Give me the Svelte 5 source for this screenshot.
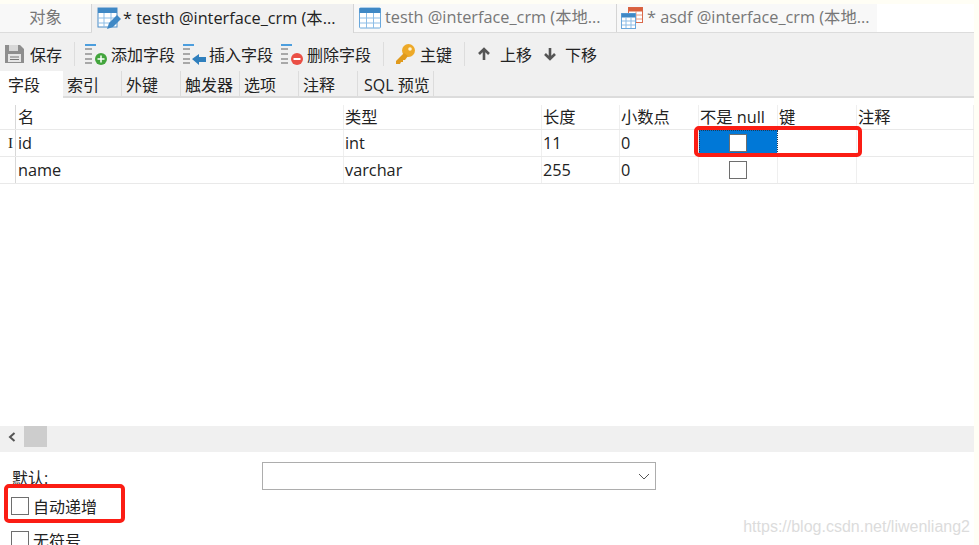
<script>
	const subTabs = ['字段', '索引', '外键', '触发器', '选项', '注释', 'SQL 预览'];
	const columns = ['名', '类型', '长度', '小数点', '不是 null', '键', '注释'];
	const rows = [
		{ name: 'id', type: 'int', length: '11', decimals: '0', marker: 'I', selected: true },
		{ name: 'name', type: 'varchar', length: '255', decimals: '0', marker: '', selected: false }
	];
</script>

<div class="page">
	<div class="window">
		<nav class="tabs">
			<div class="tab objects"><span>对象</span></div>
			<div class="tab active">
				<svg width="24" height="24" viewBox="0 0 24 24">
					<rect x="1" y="1" width="19" height="19" fill="#fff" stroke="#4a8cc7" />
					<rect x="1" y="1" width="19" height="5" fill="#3f88c5" />
					<path d="M7 6v14M14 6v14M1 11h19M1 16h19" stroke="#8dbde6" />
					<path d="M10 22l2-6 8-8 4 4-8 8z" fill="#3f88c5" />
				</svg>
				<span>* testh @interface_crm (本...</span>
			</div>
			<div class="tab idle">
				<svg width="22" height="22" viewBox="0 0 22 22">
					<rect x="0.5" y="1" width="21" height="20" rx="1" fill="#fff" stroke="#6aa8dc" />
					<rect x="0.5" y="1" width="21" height="5" fill="#3f88c5" />
					<path d="M7.5 6v15M14.5 6v15M1 11h20M1 16h20" stroke="#8dbde6" />
				</svg>
				<span>testh @interface_crm (本地...</span>
			</div>
			<div class="tab idle last">
				<svg width="22" height="22" viewBox="0 0 22 22">
					<rect x="7.5" y="0.5" width="14" height="15" fill="#fff" stroke="#d9694a" />
					<rect x="7.5" y="0.5" width="14" height="4" fill="#d9603d" />
					<path d="M15 4v11M8 8h13M8 12h13" stroke="#e89a82" />
					<rect x="0.5" y="6.5" width="14" height="15" fill="#fff" stroke="#6aa8dc" />
					<rect x="0.5" y="6.5" width="14" height="4" fill="#3f88c5" />
					<path d="M5 10v11M10 10v11M1 14h13M1 18h13" stroke="#8dbde6" />
				</svg>
				<span>* asdf @interface_crm (本地...</span>
			</div>
		</nav>

		<div class="toolbar">
			<button class="tool save">
				<svg width="20" height="20" viewBox="0 0 20 20">
					<path d="M0 1h15l4 4v14H0z" fill="#8e8e8e" />
					<rect x="4" y="1" width="9" height="6" fill="#d8d8d8" />
					<rect x="3" y="10" width="13" height="8" fill="#e6e6e6" />
					<path d="M5 13h9M5 15.500h9" stroke="#777" />
				</svg>
				保存
			</button>
			<span class="sep"></span>
			<button class="tool field">
				<svg width="24" height="24" viewBox="0 0 24 24">
					<path d="M0 3h11" stroke="#4c9ede" stroke-width="2" />
					<path d="M0 7h7M0 12h7M0 17h7M0 21h7" stroke="#a8a8a8" stroke-width="2" />
					<circle cx="16" cy="17" r="6" fill="#43a53d" />
					<path d="M12.500 17h7M16 13.500v7" stroke="#fff" stroke-width="1.500" />
				</svg>
				添加字段
			</button>
			<button class="tool field">
				<svg width="24" height="24" viewBox="0 0 24 24">
					<path d="M0 3h11" stroke="#4c9ede" stroke-width="2" />
					<path d="M0 7h7M0 12h7M0 17h7M0 21h7" stroke="#a8a8a8" stroke-width="2" />
					<path d="M9 17l7-5v3h7v5h-7v3z" fill="#2f7fbd" />
				</svg>
				插入字段
			</button>
			<button class="tool field">
				<svg width="24" height="24" viewBox="0 0 24 24">
					<path d="M0 3h11" stroke="#4c9ede" stroke-width="2" />
					<path d="M0 7h7M0 12h7M0 17h7M0 21h7" stroke="#a8a8a8" stroke-width="2" />
					<circle cx="16" cy="17" r="6" fill="#ea4f45" />
					<path d="M12.500 17h7" stroke="#fff" stroke-width="2" />
				</svg>
				删除字段
			</button>
			<span class="sep"></span>
			<button class="tool key">
				<svg width="21" height="22" viewBox="0 0 21 22">
					<circle cx="13.500" cy="7.500" r="6.500" fill="#eda928" />
					<circle cx="15" cy="6" r="1.800" fill="#fff3cf" />
					<path d="M9 10L1 18v3h4l1-2h2v-2h2l3-4z" fill="#e09a1c" />
				</svg>
				主键
			</button>
			<span class="sep"></span>
			<button class="tool move up">
				<svg width="14" height="14" viewBox="0 0 14 14">
					<path d="M7 13V2M2 7l5-5 5 5" fill="none" stroke="#555" stroke-width="2.600" />
				</svg>
				上移
			</button>
			<button class="tool move">
				<svg width="14" height="14" viewBox="0 0 14 14">
					<path d="M7 1v11M2 7l5 5 5-5" fill="none" stroke="#555" stroke-width="2.600" />
				</svg>
				下移
			</button>
		</div>

		<div class="subtabs">
			{#each subTabs as label, i}
				<div class="subtab" class:current={i === 0}>{label}</div>
			{/each}
		</div>

		<div class="grid-area">
			<div class="table">
				<div class="row head">
					<div class="marker"></div>
					{#each columns as col}
						<div class="cell">{col}</div>
					{/each}
				</div>
				{#each rows as row}
					<div class="row">
						<div class="marker"><span>{row.marker}</span></div>
						<div class="cell">{row.name}</div>
						<div class="cell">{row.type}</div>
						<div class="cell">{row.length}</div>
						<div class="cell">{row.decimals}</div>
						<div class="cell check" class:selected={row.selected}><span class="box"></span></div>
						<div class="cell"></div>
						<div class="cell"></div>
					</div>
				{/each}
			</div>
			<div class="highlight notnull"></div>
		</div>

		<div class="scrollbar">
			<svg width="10" height="12" viewBox="0 0 10 12">
				<path d="M7.500 2L3 6l4.500 4" fill="none" stroke="#555" stroke-width="2" />
			</svg>
			<span class="thumb"></span>
		</div>

		<div class="options">
			<div class="default-row">
				<label for="default-value">默认:</label>
				<div class="combo" id="default-value">
					<svg width="12" height="7" viewBox="0 0 12 7">
						<path d="M1 1l5 5 5-5" fill="none" stroke="#555" />
					</svg>
				</div>
			</div>
			<div class="option auto"><span class="box"></span>自动递增</div>
			<div class="option unsigned"><span class="box"></span>无符号</div>
			<div class="highlight auto-inc"></div>
			<div class="watermark">https://blog.csdn.net/liwenliang2</div>
		</div>
	</div>
</div>

<style>
	:global(body) {
		margin: 0;
		background: #fffef5;
	}

	.page {
		width: 979px;
		height: 545px;
		padding: 4px 5px 0 0;
		box-sizing: border-box;
		overflow: hidden;
		font-family: 'Open Sans', 'Noto Sans CJK SC', sans-serif;
		font-size: 16px;
		color: #222;
	}

	.window {
		height: 541px;
		background: #fff;
		display: flex;
		flex-direction: column;
	}

	.tabs {
		display: flex;
		height: 29px;
		flex: none;
		font-size: 16.3px;
		border-bottom: 1px solid #dcdcdc;
		box-sizing: border-box;
	}

	.tab {
		display: flex;
		align-items: center;
		gap: 2px;
		height: 28px;
		box-sizing: border-box;
		white-space: nowrap;
		overflow: hidden;
	}

	.tab span {
		margin-bottom: 4px;
	}

	.objects {
		width: 92px;
		justify-content: center;
		background: #f8f8f8;
		color: #777;
		border-right: 1px solid #d5d5d5;
	}

	.active {
		width: 262px;
		padding-left: 5px;
		background: #f0f0f0;
		color: #222;
		border-right: 1px solid #d5d5d5;
		height: 30px;
	}

	.idle {
		width: 263px;
		gap: 4px;
		padding-left: 5px;
		background: #f8f8f8;
		color: #777;
		border-right: 1px solid #d5d5d5;
	}

	.last {
		width: 260px;
		padding-left: 4px;
		border-right: none;
	}

	.toolbar {
		display: flex;
		align-items: center;
		height: 38px;
		flex: none;
		padding-left: 5px;
		padding-top: 4px;
		box-sizing: border-box;
		background: #f0f0f0;
	}

	.tool {
		display: flex;
		align-items: center;
		gap: 2px;
		padding: 0;
		border: none;
		background: none;
		font: inherit;
		color: #222;
		white-space: nowrap;
	}

	.save {
		gap: 5px;
		margin-right: 12px;
	}

	.field {
		margin-right: 8px;
	}

	.field:nth-of-type(4) {
		margin-right: 12px;
	}

	.key {
		gap: 4px;
		margin-right: 12px;
	}

	.move {
		gap: 8px;
	}

	.up {
		gap: 9px;
		margin-left: 2px;
		margin-right: 11px;
	}

	.sep {
		width: 1px;
		height: 24px;
		background: #ddd;
		margin-right: 10px;
	}

	.sep:has(+ .key) {
		margin-right: 11px;
	}

	.subtabs {
		display: flex;
		height: 25px;
		flex: none;
		background: #f0f0f0;
		border-bottom: 2px solid #dcdcdc;
	}

	.subtab {
		width: 59px;
		height: 25px;
		line-height: 28px;
		padding-left: 4px;
		box-sizing: border-box;
		border-right: 1px solid #dcdcdc;
		white-space: nowrap;
	}

	.subtab.current {
		width: 63px;
		height: 27px;
		padding-left: 8px;
		background: #fff;
		border-right: none;
		margin-bottom: -2px;
		position: relative;
	}

	.subtab:last-child {
		width: 76px;
		padding-left: 6px;
	}

	.grid-area {
		position: relative;
		flex: 1;
		padding-top: 7px;
		min-height: 0;
		font-size: 16.3px;
	}

	.row {
		display: grid;
		grid-template-columns: 16px 328px 198px 78px 79px 79px 79px 1fr;
		height: 27px;
		box-sizing: border-box;
		border-bottom: 1px solid #e9e9e9;
	}

	.row.head {
		height: 25px;
	}

	.marker {
		border-right: 1px solid #d8d8d8;
		font-family: 'Liberation Serif', serif;
		font-size: 15px;
		line-height: 26px;
		text-align: right;
		padding-right: 2px;
	}

	.cell {
		padding-left: 1px;
		line-height: 26px;
		border-right: 1px solid #efefef;
		white-space: nowrap;
	}

	.marker + .cell {
		padding-left: 2px;
	}

	.head .cell {
		line-height: 24px;
	}

	.check {
		display: flex;
		align-items: center;
		justify-content: center;
		padding: 0;
	}

	.selected {
		background: #0078d7;
		outline: 1px dotted #1a3a5a;
		outline-offset: -1px;
	}

	.box {
		display: block;
		flex: none;
		width: 18px;
		height: 18px;
		box-sizing: border-box;
		background: #fff;
		border: 1px solid #6e6e6e;
	}

	.highlight {
		position: absolute;
		box-sizing: border-box;
		border: 4px solid #fb1d14;
		border-radius: 5px;
	}

	.notnull {
		left: 694px;
		top: 28px;
		width: 168px;
		height: 31px;
	}

	.scrollbar {
		display: flex;
		align-items: center;
		height: 26px;
		flex: none;
		background: #f0f0f0;
		padding: 0 0 5px 7px;
		box-sizing: border-box;
	}

	.thumb {
		width: 23px;
		height: 21px;
		margin-left: 7px;
		background: #cdcdcd;
	}

	.options {
		position: relative;
		height: 93px;
		flex: none;
		padding-left: 11px;
		overflow: hidden;
	}

	.default-row {
		display: flex;
		align-items: center;
		height: 28px;
		margin-top: 10px;
	}

	.default-row label {
		width: 251px;
		padding-top: 3px;
		padding-left: 1px;
		box-sizing: border-box;
		line-height: 20px;
	}

	.combo {
		display: flex;
		align-items: center;
		justify-content: flex-end;
		width: 394px;
		height: 28px;
		box-sizing: border-box;
		border: 1px solid #adadad;
		padding-right: 5px;
	}

	.option {
		display: flex;
		align-items: center;
		gap: 4px;
		height: 24px;
	}

	.auto {
		margin-top: 4px;
	}

	.unsigned {
		margin-top: 10px;
	}

	.auto-inc {
		left: 4px;
		top: 32px;
		width: 121px;
		height: 39px;
	}

	.watermark {
		position: absolute;
		right: 4px;
		top: 66px;
		font-family: 'Liberation Sans', sans-serif;
		font-size: 16px;
		color: #dcdcdc;
		white-space: nowrap;
	}
</style>
